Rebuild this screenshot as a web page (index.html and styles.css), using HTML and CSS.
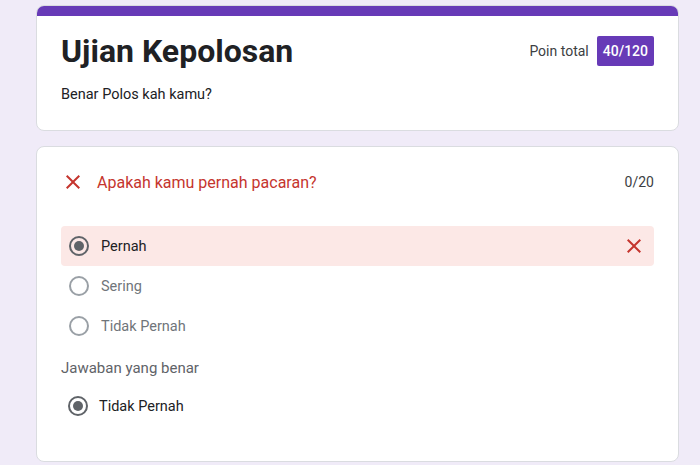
FILE: index.html
```html
<!DOCTYPE html>
<html lang="id">

<head>
    <meta charset="UTF-8">
    <meta name="viewport" content="width=device-width, initial-scale=1.0">
    <title>Ujian Kepolosan</title>
    <link rel="stylesheet" href="styles.css">
</head>

<body>
    <div class="page">
        <div class="card header-card">
            <div class="top-bar"></div>
            <div class="header-body">
                <div class="header-row">
                    <h1>Ujian Kepolosan</h1>
                    <div class="score">
                        <span>Poin total</span>
                        <span class="badge">40/120</span>
                    </div>
                </div>
                <p class="desc">Benar Polos kah kamu?</p>
            </div>
        </div>

        <div class="card question-card">
            <div class="question-row">
                <svg class="icon-x" viewBox="0 0 24 24" width="24" height="24">
                    <path d="M19 6.41 17.59 5 12 10.59 6.41 5 5 6.41 10.59 12 5 17.59 6.41 19 12 13.41 17.59 19 19 17.59 13.41 12z" />
                </svg>
                <div class="question">Apakah kamu pernah pacaran?</div>
                <div class="points">0/20</div>
            </div>

            <div class="options">
                <div class="option wrong">
                    <span class="radio checked"></span>
                    <span class="label">Pernah</span>
                    <svg class="icon-x" viewBox="0 0 24 24" width="24" height="24">
                        <path d="M19 6.41 17.59 5 12 10.59 6.41 5 5 6.41 10.59 12 5 17.59 6.41 19 12 13.41 17.59 19 19 17.59 13.41 12z" />
                    </svg>
                </div>
                <div class="option">
                    <span class="radio"></span>
                    <span class="label">Sering</span>
                </div>
                <div class="option">
                    <span class="radio"></span>
                    <span class="label">Tidak Pernah</span>
                </div>
            </div>

            <div class="correct-title">Jawaban yang benar</div>
            <div class="option correct">
                <span class="radio checked"></span>
                <span class="label">Tidak Pernah</span>
            </div>
        </div>
    </div>
</body>

</html>
```

FILE: styles.css
```css
body {
    margin: 0;
    padding: 0;
    background-color: #f0ebf8;
    font-family: Roboto, "Liberation Sans", sans-serif;
    color: #202124;
}

.page {
    width: 643px;
    margin-left: 36px;
    padding-top: 5px;
}

.card {
    background-color: #fff;
    border: 1px solid #dadce0;
    border-radius: 8px;
    box-sizing: border-box;
}

.header-card {
    height: 126px;
    overflow: hidden;
}

.top-bar {
    height: 10px;
    background-color: #673ab7;
}

.header-body {
    padding: 15px 24px 0 24px;
}

.header-row {
    display: flex;
    align-items: center;
    justify-content: space-between;
}

h1 {
    margin: 0;
    font-size: 32px;
    line-height: 40px;
    font-weight: 700;
    color: #202124;
}

.score {
    display: flex;
    align-items: center;
    gap: 8px;
    font-size: 14px;
    color: #3c4043;
}

.badge {
    background-color: #673ab7;
    color: #fff;
    font-weight: 500;
    height: 30px;
    line-height: 30px;
    padding: 0 6px;
    border-radius: 2px;
}

.desc {
    margin: 14px 0 0 0;
    font-size: 14.5px;
    line-height: 20px;
    color: #202124;
}

.question-card {
    margin-top: 15px;
    height: 316px;
    padding: 23px 24px 0 24px;
}

.question-row {
    display: flex;
    align-items: center;
    height: 24px;
}

.icon-x {
    fill: #c5352e;
    flex-shrink: 0;
}

.question {
    flex: 1;
    margin-left: 12px;
    font-size: 16px;
    color: #c5352e;
}

.points {
    font-size: 14px;
    color: #3c4043;
}

.options {
    margin-top: 32px;
}

.option {
    display: flex;
    align-items: center;
    height: 40px;
    padding: 0 8px;
    border-radius: 4px;
    font-size: 14.5px;
    color: #70757a;
}

.option .label {
    flex: 1;
    margin-left: 12px;
}

.option.wrong {
    background-color: #fce8e6;
    color: #202124;
}

.radio {
    width: 20px;
    height: 20px;
    box-sizing: border-box;
    border: 2px solid #9aa0a6;
    border-radius: 50%;
    display: flex;
    align-items: center;
    justify-content: center;
    flex-shrink: 0;
}

.radio.checked {
    border-color: #5f6368;
}

.radio.checked::after {
    content: "";
    width: 10px;
    height: 10px;
    border-radius: 50%;
    background-color: #5f6368;
}

.correct-title {
    margin-top: 12px;
    font-size: 15px;
    line-height: 20px;
    color: #5f6368;
}

.option.correct {
    margin-top: 8px;
    padding-left: 7px;
    color: #202124;
}

.option.correct .label {
    margin-left: 11px;
}
```
